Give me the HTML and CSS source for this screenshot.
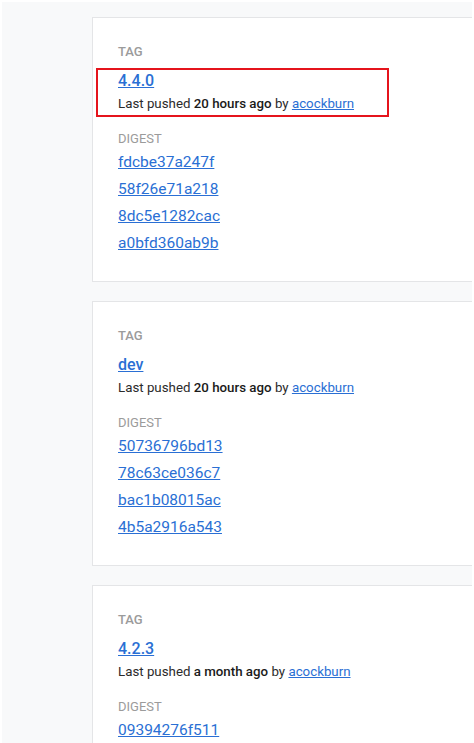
FILE: index.html
```html
<!DOCTYPE html>
<html lang="en">
<head>
  <meta charset="UTF-8">
  <title>Tags</title>
  <link rel="stylesheet" href="styles.css">
</head>
<body>
  <div class="page">
    <div class="tag-list">
      <div class="tag-card">
        <div class="label label-tag">TAG</div>
        <div class="highlight">
          <a class="tag-name" href="#">4.4.0</a>
          <div class="pushed">Last pushed <b>20 hours ago</b> by <a href="#">acockburn</a></div>
        </div>
        <div class="label label-digest">DIGEST</div>
        <ul class="digests">
          <li><a href="#">fdcbe37a247f</a></li>
          <li><a href="#">58f26e71a218</a></li>
          <li><a href="#">8dc5e1282cac</a></li>
          <li><a href="#">a0bfd360ab9b</a></li>
        </ul>
      </div>
      <div class="tag-card">
        <div class="label label-tag">TAG</div>
        <a class="tag-name" href="#">dev</a>
        <div class="pushed">Last pushed <b>20 hours ago</b> by <a href="#">acockburn</a></div>
        <div class="label label-digest">DIGEST</div>
        <ul class="digests">
          <li><a href="#">50736796bd13</a></li>
          <li><a href="#">78c63ce036c7</a></li>
          <li><a href="#">bac1b08015ac</a></li>
          <li><a href="#">4b5a2916a543</a></li>
        </ul>
      </div>
      <div class="tag-card">
        <div class="label label-tag">TAG</div>
        <a class="tag-name" href="#">4.2.3</a>
        <div class="pushed">Last pushed <b>a month ago</b> by <a href="#">acockburn</a></div>
        <div class="label label-digest">DIGEST</div>
        <ul class="digests">
          <li><a href="#">09394276f511</a></li>
        </ul>
      </div>
    </div>
  </div>
</body>
</html>
```

FILE: styles.css
```css
html, body { margin: 0; height: 100%; overflow: hidden; }
body { background: #fff; font-family: Roboto, "Liberation Sans", Arial, sans-serif; color: #222; }
.page {
  margin: 2px 2px 0 2px;
  height: 100%;
  background: #f8f9fa;
  padding: 15px 0 0 90px;
  box-sizing: border-box;
  overflow: hidden;
}
.tag-list { display: flex; flex-direction: column; gap: 19px; margin-right: -4px; }
.tag-card {
  background: #fff;
  border: 1px solid #e4e5e7;
  padding: 26px 0 24px 25px;
  display: flex;
  flex-direction: column;
  align-items: flex-start;
}
.label { font-size: 13px; line-height: 16px; color: #9b9b9b; }
.label-tag { font-weight: 500; }
.label-digest { margin-top: 18px; }
a { color: #2a6fd4; }
.tag-name {
  display: block;
  margin-top: 10px;
  font-size: 16px;
  line-height: 22px;
  font-weight: 500;
}
.pushed { margin-top: 3px; font-size: 13.3px; line-height: 18px; color: #2b2b2b; }
.pushed b { font-weight: 500; color: #1a1a1a; }
.highlight {
  border: 2px solid #e5141c;
  margin: 8px 0 -4px -22px;
  padding: 0 0 2px 20px;
  width: 269px;
}
.highlight .tag-name { margin-top: 0; }
.digests { list-style: none; margin: 2px 0 0 0; padding: 0; }
.digests li { font-size: 15.5px; line-height: 27px; }
```
